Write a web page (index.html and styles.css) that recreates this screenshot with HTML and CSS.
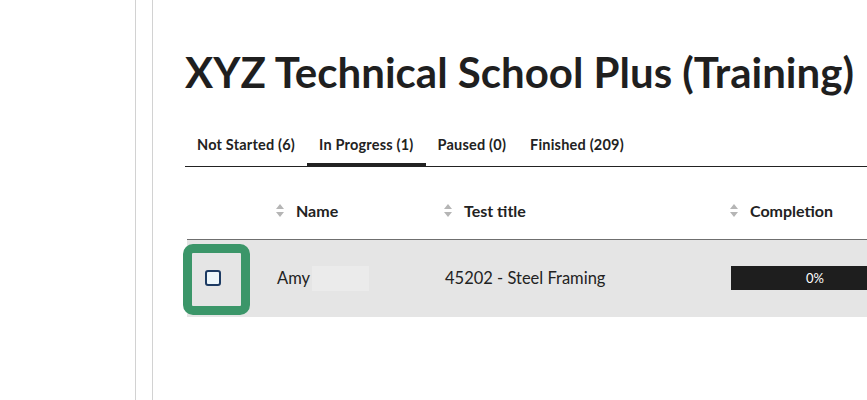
FILE: index.html
```html
<!DOCTYPE html>
<html lang="en">
<head>
  <meta charset="UTF-8">
  <meta name="viewport" content="width=device-width, initial-scale=1">
  <title>XYZ Technical School Plus (Training)</title>
<link rel="stylesheet" href="styles.css">
</head>
<body>

<div class="layout">
<aside class="sidebar"></aside>
<div class="rail"></div>

<main class="content">
<h1 class="title">XYZ Technical School Plus (Training)</h1>

<nav class="tabs">
<a class="tab">Not Started (6)</a>
<a class="tab active">In Progress (1)</a>
<a class="tab">Paused (0)</a>
<a class="tab">Finished (209)</a>
</nav>

<div class="table">
<div class="row head">
<div class="cell check"></div>
<div class="cell"><svg class="sort" width="8" height="13" viewBox="0 0 8 13"><path d="M4 0 L8 5 H0 Z M4 13 L8 8 H0 Z" fill="#b5b5b5"/></svg>Name</div>
<div class="cell"><svg class="sort" width="8" height="13" viewBox="0 0 8 13"><path d="M4 0 L8 5 H0 Z M4 13 L8 8 H0 Z" fill="#b5b5b5"/></svg>Test title</div>
<div class="cell"><svg class="sort" width="8" height="13" viewBox="0 0 8 13"><path d="M4 0 L8 5 H0 Z M4 13 L8 8 H0 Z" fill="#b5b5b5"/></svg>Completion</div>
</div>

<div class="row item">
<div class="cell check">
<span class="checkbox"></span>
<span class="highlight"></span>
</div>
<div class="cell">Amy <span class="blur"></span></div>
<div class="cell">45202 - Steel Framing</div>
<div class="cell"><div class="progress"><span>0%</span></div></div>
</div>
</div>
</main>
</div>

</body>
</html>
```

FILE: styles.css
```css
* {
margin: 0;
padding: 0;
box-sizing: border-box;
font-family: Lato, "Open Sans", sans-serif;
}
body, html {
width: 100%;
height: 100%;
overflow: hidden;
background: #fff;
color: #222;
}
.layout {
display: flex;
height: 100%;
}
.sidebar {
flex: 0 0 136px;
border-right: 1px solid #d2d2d2;
}
.rail {
flex: 0 0 17px;
border-right: 1px solid #d2d2d2;
}
.content {
flex: 0 0 760px;
padding: 47px 0 0 32px;
}
.title {
font-size: 42px;
font-weight: 700;
line-height: 50px;
color: #1f1f1f;
white-space: nowrap;
}
.tabs {
display: flex;
margin-top: 39px;
border-bottom: 1.5px solid #222;
}
.tab {
display: block;
padding: 0 12px 9px;
font-size: 14.5px;
letter-spacing: 0.2px;
font-weight: 700;
line-height: 18px;
color: #222;
border-bottom: 4px solid transparent;
margin-bottom: -1.5px;
}
.tab.active {
border-bottom-color: #222;
}
.table {
margin-left: 2px;
}
.row {
display: grid;
grid-template-columns: 78px 168px 286px 200px;
}
.row.head {
height: 73px;
align-items: end;
padding-bottom: 18px;
border-bottom: 1.5px solid #6f6f6f;
font-size: 16px;
font-weight: 700;
line-height: 20px;
}
.row.item {
height: 77px;
align-items: center;
background: #e5e5e5;
font-size: 16.5px;
}
.cell {
display: flex;
align-items: center;
padding-left: 12px;
}
.cell.check {
position: relative;
padding-left: 18px;
height: 100%;
}
.sort {
margin-right: 12px;
margin-left: -1px;
}
.checkbox {
width: 16px;
height: 16px;
border: 2px solid #1d3b63;
border-radius: 3px;
background: #eef7fb;
}
.highlight {
position: absolute;
left: -4px;
top: 4px;
width: 67px;
height: 71px;
border: 9px solid #3b9669;
border-radius: 10px;
}
.blur {
display: inline-block;
width: 57px;
height: 25px;
margin-left: 2px;
background: #ebebeb;
}
.progress {
width: 168px;
height: 24px;
background: #1e1e1e;
color: #fff;
font-size: 13px;
display: flex;
align-items: center;
justify-content: center;
}
```
